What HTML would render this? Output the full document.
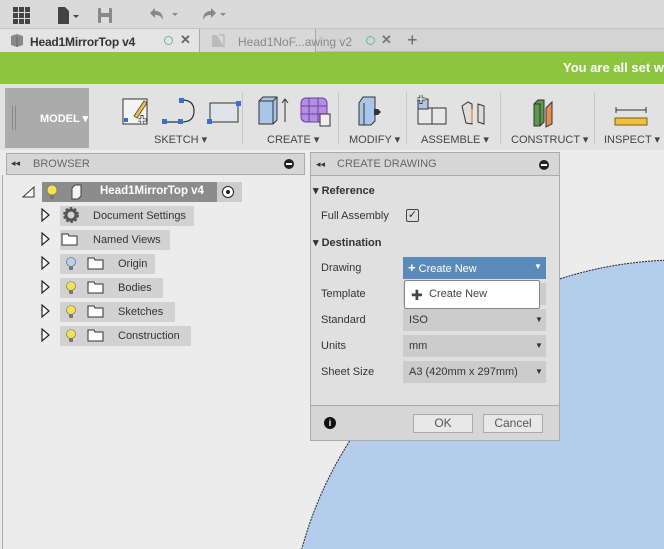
<!DOCTYPE html><html><head><style>
*{margin:0;padding:0;box-sizing:border-box}
html,body{overflow:hidden}
body{width:664px;height:549px;background:#ececec;font-family:"Liberation Sans",sans-serif;font-size:11px;color:#333;position:relative}
.a{position:absolute}
.lbl{font-size:11px;color:#444}
</style></head><body>
<svg class="a" style="left:0px;top:0px" width="664" height="549">
<circle cx="680" cy="652" r="392" fill="#b5cdec" stroke="#222" stroke-dasharray="2 1" stroke-width="1"/>
<path d="M340 460 L420 340 L560 270" stroke="#ccc" fill="none" stroke-width="0.5"/>
</svg>
<!-- top bar -->
<div class="a" style="left:0;top:0;width:664px;height:29px;background:#dadada;border-bottom:1px solid #c4c4c4"></div>
<svg class="a" style="left:12px;top:6px" width="220" height="18">
<g fill="#444"><rect x="1" y="1" width="5" height="5"/><rect x="7" y="1" width="5" height="5"/><rect x="13" y="1" width="5" height="5"/><rect x="1" y="7" width="5" height="5"/><rect x="7" y="7" width="5" height="5"/><rect x="13" y="7" width="5" height="5"/><rect x="1" y="13" width="5" height="5"/><rect x="7" y="13" width="5" height="5"/><rect x="13" y="13" width="5" height="5"/></g>
<path d="M46 1h7l4 4v13h-11z" fill="#444"/><path d="M61 9l3 3 3-3z" fill="#444"/>
<rect x="86" y="2" width="14" height="15" rx="1" fill="#888"/><rect x="89" y="2" width="8" height="5" fill="#ddd"/><rect x="89" y="11" width="8" height="6" fill="#ddd"/>
<path d="M138 7l5-5v3c6 0 8 4 8 9c-2-4-4-5-8-5v3z" fill="#888"/><path d="M160 7l3 3 3-3z" fill="#888"/>
<path d="M204 7l-5-5v3c-6 0-8 4-8 9c2-4 4-5 8-5v3z" fill="#888"/><path d="M208 7l3 3 3-3z" fill="#888"/>
</svg>
<!-- tabs -->
<div class="a" style="left:0;top:29px;width:664px;height:23px;background:#d4d4d4;border-bottom:1px solid #bbb"></div>
<div class="a" style="left:0;top:29px;width:200px;height:23px;background:#e4e4e4;border-right:1px solid #aaa"></div>
<svg class="a" style="left:9px;top:33px" width="16" height="15"><path d="M2 3l6-2 6 2v9l-6 2-6-2z" fill="#888"/><path d="M8 4v10" stroke="#666"/></svg>
<div class="a" style="left:30px;top:35px;font-size:12px;font-weight:bold;color:#333;letter-spacing:-0.2px">Head1MirrorTop v4</div>
<div class="a" style="left:164px;top:36px;width:9px;height:9px;border:1.5px solid #5fb8a0;border-radius:50%"></div>
<div class="a" style="left:180px;top:32px;font-size:13px;font-weight:bold;color:#666">✕</div>
<div class="a" style="left:200px;top:29px;width:116px;height:23px;background:#d8d8d8;border-right:1px solid #aaa"></div>
<svg class="a" style="left:211px;top:34px" width="14" height="14"><path d="M1 1h5l7 12h-12z" fill="#bbb"/><path d="M8 1h5v12" stroke="#aaa" fill="none"/></svg>
<div class="a" style="left:238px;top:35px;font-size:12px;color:#888">Head1NoF...awing v2</div>
<div class="a" style="left:366px;top:36px;width:9px;height:9px;border:1.5px solid #5fb8a0;border-radius:50%"></div>
<div class="a" style="left:381px;top:32px;font-size:13px;font-weight:bold;color:#777">✕</div>
<div class="a" style="left:407px;top:30px;font-size:18px;color:#666">+</div>
<!-- green -->
<div class="a" style="left:0;top:52px;width:664px;height:32px;background:#8cc63f"></div>
<div class="a" style="left:563px;top:60px;font-size:13px;font-weight:bold;color:#fff;white-space:nowrap">You are all set w</div>
<!-- toolbar -->
<div class="a" style="left:0;top:84px;width:664px;height:66px;background:#e2e2e2"></div>
<div class="a" style="left:5px;top:88px;width:84px;height:60px;background:#ababab"></div>
<div class="a" style="left:12px;top:106px;width:4px;height:24px;border-left:1px solid #888;border-right:1px solid #888"></div>
<div class="a" style="left:40px;top:112px;font-size:11px;font-weight:bold;color:#fff">MODEL ▾</div>
<svg class="a" style="left:120px;top:94px" width="544" height="40">
<rect x="3" y="5" width="24" height="25" fill="#f4f4f4" stroke="#333"/><path d="M14 22l10-15 3 2-10 15z" fill="#f0c040" stroke="#333" stroke-width=".7"/><rect x="4" y="24" width="4" height="4" fill="#3a6fd0"/><path d="M22 21v9M18 26h9" stroke="#333" stroke-width="3"/><path d="M22 22v8M18 26h8" stroke="#fff" stroke-width="1.5"/>
<path d="M45 28h14M62 6q12 0 12 11t-12 11" stroke="#333" fill="none" stroke-width="1.2"/><rect x="42" y="25" width="5" height="5" fill="#3a6fd0"/><rect x="58" y="25" width="5" height="5" fill="#3a6fd0"/><rect x="59" y="4" width="5" height="5" fill="#3a6fd0"/>
<rect x="90" y="9" width="28" height="19" fill="#e0e4ea" stroke="#333"/><rect x="87" y="25" width="5" height="5" fill="#3a6fd0"/><rect x="116" y="7" width="5" height="5" fill="#3a6fd0"/>
<path d="M139 7l4-4h14v23l-4 4h-14z" fill="#a9c6e8" stroke="#333"/><path d="M139 7h14v23M153 7l4-4" stroke="#333" fill="none"/><path d="M165 28v-22M162 9l3-4 3 4" stroke="#333" fill="none"/>
<rect x="181" y="4" width="26" height="24" rx="5" fill="#b48ee0" stroke="#6a3fa8"/><path d="M181 12h26M181 20h26M189 4v24M198 4v24" stroke="#6a3fa8"/><rect x="200" y="20" width="10" height="12" fill="#eee" stroke="#333"/>
<path d="M239 9l4-6h12v24l-4 4h-12z" fill="#a9c6e8" stroke="#333"/><path d="M244 9v22" stroke="#333"/><path d="M254 15h4l3 3-3 3h-4z" fill="#333"/>
<rect x="298" y="14" width="14" height="16" fill="#e8e8e8" stroke="#333"/><rect x="312" y="14" width="14" height="16" fill="#e8e8e8" stroke="#333"/><rect x="298" y="5" width="10" height="10" fill="#a9c6e8" stroke="#333"/><path d="M301 1v9M297 5h8" stroke="#333" stroke-width="3"/><path d="M301 1v8M297 5h8" stroke="#fff" stroke-width="1.3"/>
<path d="M342 12l6-4 4 2v20l-6-1z" fill="#ddd" stroke="#333"/><path d="M358 10l6 2v18l-6-2z" fill="#ddd" stroke="#333"/><path d="M352 15v14" stroke="#e07020"/>
<path d="M414 10l4-4h6v22l-4 4h-6z" fill="#5a9a4a" stroke="#333"/><path d="M414 10h6v22" stroke="#333" fill="none"/><path d="M426 14l6-6v22l-6 3z" fill="#e88c50" stroke="#333"/>
<path d="M496 16h30M496 13v6M526 13v6" stroke="#333"/><rect x="495" y="24" width="32" height="7" fill="#f0c040" stroke="#806000"/>
</svg>
<div class="a lbl" style="left:154px;top:133px">SKETCH ▾</div>
<div class="a lbl" style="left:267px;top:133px">CREATE ▾</div>
<div class="a lbl" style="left:349px;top:133px">MODIFY ▾</div>
<div class="a lbl" style="left:421px;top:133px">ASSEMBLE ▾</div>
<div class="a lbl" style="left:511px;top:133px">CONSTRUCT ▾</div>
<div class="a lbl" style="left:604px;top:133px">INSPECT ▾</div>
<div class="a" style="left:242px;top:92px;width:1px;height:52px;background:#c8c8c8"></div>
<div class="a" style="left:338px;top:92px;width:1px;height:52px;background:#c8c8c8"></div>
<div class="a" style="left:406px;top:92px;width:1px;height:52px;background:#c8c8c8"></div>
<div class="a" style="left:500px;top:92px;width:1px;height:52px;background:#c8c8c8"></div>
<div class="a" style="left:594px;top:92px;width:1px;height:52px;background:#c8c8c8"></div>
<!-- browser -->
<div class="a" style="left:6px;top:153px;width:299px;height:22px;background:#d6d6d6;border:1px solid #aaa"></div>
<div class="a" style="left:11px;top:158px;font-size:9px;color:#333">◂◂</div>
<div class="a" style="left:33px;top:158px;color:#666">BROWSER</div>
<div class="a" style="left:284px;top:159px;width:10px;height:10px;border-radius:50%;background:#222"><div style="margin:4px 2px;height:2px;background:#fff"></div></div>
<div class="a" style="left:2px;top:175px;width:1px;height:374px;background:#aaa"></div>
<svg class="a" style="left:22px;top:186px" width="14" height="12"><path d="M1 11h11v-10z" fill="#fff" stroke="#333"/></svg>
<div class="a" style="left:42px;top:182px;width:200px;height:20px;background:#ccc"></div>
<div class="a" style="left:42px;top:182px;width:175px;height:20px;background:#8c8c8c"></div>
<div class="a" style="left:100px;top:185px;font-size:11.5px;font-weight:bold;color:#fff">Head1MirrorTop v4</div>
<div class="a" style="left:222px;top:186px;width:12px;height:12px;border:1.5px solid #222;border-radius:50%;background:#fff"><div style="margin:2.5px;width:4px;height:4px;border-radius:50%;background:#222"></div></div>
<svg class="a" style="left:46px;top:184px" width="50" height="16"><circle cx="6" cy="6" r="5" fill="#f5e050" stroke="#666" stroke-width=".6"/><rect x="4" y="11" width="4" height="4" fill="#777"/><path d="M26 4l3-3h6v11l-3 3h-6z" fill="#f4f4f4" stroke="#444"/></svg>
<!-- rows -->
<div class="a" style="left:60px;top:206px;width:134px;height:20px;background:#d2d2d2"></div>
<div class="a" style="left:60px;top:230px;width:110px;height:20px;background:#d2d2d2"></div>
<div class="a" style="left:60px;top:254px;width:95px;height:20px;background:#d2d2d2"></div>
<div class="a" style="left:60px;top:278px;width:103px;height:20px;background:#d2d2d2"></div>
<div class="a" style="left:60px;top:302px;width:115px;height:20px;background:#d2d2d2"></div>
<div class="a" style="left:60px;top:326px;width:131px;height:20px;background:#d2d2d2"></div>
<svg class="a" style="left:38px;top:205px" width="70" height="145">
<g fill="#fff" stroke="#222" stroke-width="1.2"><path d="M4 4l7 6-7 6z"/><path d="M4 28l7 6-7 6z"/><path d="M4 52l7 6-7 6z"/><path d="M4 76l7 6-7 6z"/><path d="M4 100l7 6-7 6z"/><path d="M4 124l7 6-7 6z"/></g>
<circle cx="33" cy="10" r="5" fill="none" stroke="#555" stroke-width="3"/><circle cx="33" cy="10" r="7" fill="none" stroke="#555" stroke-width="2" stroke-dasharray="2.5 2"/>
<path d="M24 29h6l1 2h8v9h-15z" fill="#fff" stroke="#333"/>
<g fill="#fff" stroke="#333"><path d="M50 53h6l1 2h8v9h-15z"/><path d="M50 77h6l1 2h8v9h-15z"/><path d="M50 101h6l1 2h8v9h-15z"/><path d="M50 125h6l1 2h8v9h-15z"/></g>
<circle cx="33" cy="57" r="4.5" fill="#b8d0f0" stroke="#555" stroke-width=".6"/><rect x="31" y="61" width="4" height="4" fill="#777"/>
<circle cx="33" cy="81" r="4.5" fill="#f5e050" stroke="#666" stroke-width=".6"/><rect x="31" y="85" width="4" height="4" fill="#777"/>
<circle cx="33" cy="105" r="4.5" fill="#f5e050" stroke="#666" stroke-width=".6"/><rect x="31" y="109" width="4" height="4" fill="#777"/>
<circle cx="33" cy="129" r="4.5" fill="#f5e050" stroke="#666" stroke-width=".6"/><rect x="31" y="133" width="4" height="4" fill="#777"/>
</svg>
<div class="a" style="left:93px;top:210px;color:#333">Document Settings</div>
<div class="a" style="left:93px;top:234px;color:#333">Named Views</div>
<div class="a" style="left:118px;top:258px;color:#333">Origin</div>
<div class="a" style="left:118px;top:282px;color:#333">Bodies</div>
<div class="a" style="left:118px;top:306px;color:#333">Sketches</div>
<div class="a" style="left:118px;top:330px;color:#333">Construction</div>
<!-- create drawing panel -->
<div class="a" style="left:310px;top:152px;width:250px;height:289px;background:#e0e0e0;border:1px solid #aaa"></div>
<div class="a" style="left:311px;top:153px;width:248px;height:23px;background:#d6d6d6;border-bottom:1px solid #aaa"></div>
<div class="a" style="left:316px;top:159px;font-size:9px;color:#333">◂◂</div>
<div class="a" style="left:337px;top:158px;color:#666">CREATE DRAWING</div>
<div class="a" style="left:539px;top:160px;width:10px;height:10px;border-radius:50%;background:#222"><div style="margin:4px 2px;height:2px;background:#fff"></div></div>
<div class="a" style="left:313px;top:184px;font-weight:bold;color:#333">▾ Reference</div>
<div class="a" style="left:321px;top:210px;color:#333">Full Assembly</div>
<div class="a" style="left:406px;top:209px;width:13px;height:13px;border:1px solid #444;border-radius:2px;background:#ddd;font-size:11px;line-height:11px;text-align:center">✓</div>
<div class="a" style="left:313px;top:236px;font-weight:bold;color:#333">▾ Destination</div>
<div class="a" style="left:321px;top:262px;color:#333">Drawing</div>
<div class="a" style="left:321px;top:288px;color:#333">Template</div>
<div class="a" style="left:321px;top:314px;color:#333">Standard</div>
<div class="a" style="left:321px;top:340px;color:#333">Units</div>
<div class="a" style="left:321px;top:366px;color:#333">Sheet Size</div>
<div class="a" style="left:403px;top:257px;width:143px;height:22px;background:#5a8ab7"></div>
<div class="a" style="left:408px;top:260px;color:#fff;font-size:11px"><b style="font-size:13px">+</b> Create New</div>
<div class="a" style="left:534px;top:262px;color:#fff;font-size:8px">▼</div>
<div class="a" style="left:403px;top:283px;width:143px;height:22px;background:#ccc"></div>
<div class="a" style="left:404px;top:280px;width:136px;height:29px;background:#fff;border:1px solid #888;border-radius:2px"></div>
<div class="a" style="left:411px;top:287px;color:#444"><span style="font-size:14px">✚</span></div>
<div class="a" style="left:429px;top:288px;color:#444">Create New</div>
<div class="a" style="left:403px;top:309px;width:143px;height:22px;background:#ccc"></div>
<div class="a" style="left:409px;top:314px;color:#333">ISO</div>
<div class="a" style="left:403px;top:335px;width:143px;height:22px;background:#ccc"></div>
<div class="a" style="left:409px;top:340px;color:#333">mm</div>
<div class="a" style="left:403px;top:361px;width:143px;height:22px;background:#ccc"></div>
<div class="a" style="left:409px;top:366px;color:#333">A3 (420mm x 297mm)</div>
<div class="a" style="left:535px;top:315px;font-size:8px">▼</div>
<div class="a" style="left:535px;top:341px;font-size:8px">▼</div>
<div class="a" style="left:535px;top:367px;font-size:8px">▼</div>
<div class="a" style="left:311px;top:405px;width:248px;height:35px;background:#d6d6d6;border-top:1px solid #aaa"></div>
<div class="a" style="left:324px;top:417px;width:12px;height:12px;border-radius:50%;background:#111;color:#fff;font-size:9px;font-weight:bold;text-align:center;line-height:12px">i</div>
<div class="a" style="left:413px;top:414px;width:60px;height:19px;background:#e8e8e8;border:1px solid #aaa;text-align:center;line-height:17px;color:#555;font-size:12px">OK</div>
<div class="a" style="left:483px;top:414px;width:60px;height:19px;background:#e8e8e8;border:1px solid #aaa;text-align:center;line-height:17px;color:#555;font-size:12px">Cancel</div>
</body></html>
